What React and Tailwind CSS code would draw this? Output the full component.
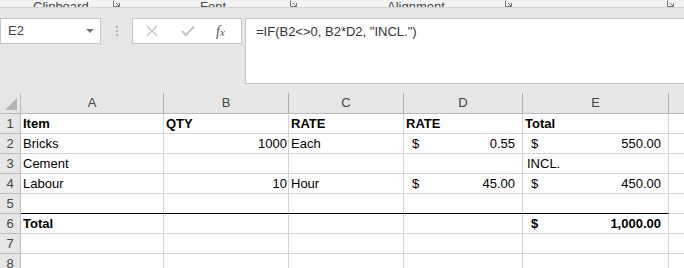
import React from 'react';

const font = { fontFamily: '"Liberation Sans", Arial, sans-serif' };

const cols = [
  { key: 'A', w: 'w-[143px]' },
  { key: 'B', w: 'w-[125px]' },
  { key: 'C', w: 'w-[115px]' },
  { key: 'D', w: 'w-[119px]' },
  { key: 'E', w: 'w-[146px]' },
];

// each row: cells for A..E
const rows = [
  { n: 1, bold: true, cells: ['Item', 'QTY', 'RATE', 'RATE', 'Total'] },
  { n: 2, cells: ['Bricks', { right: '1000' }, 'Each', { acc: '0.55' }, { acc: '550.00' }] },
  { n: 3, cells: ['Cement', '', '', '', { pad: 'INCL.' }] },
  { n: 4, cells: ['Labour', { right: '10' }, 'Hour', { acc: '45.00' }, { acc: '450.00' }] },
  { n: 5, thick: true, cells: ['', '', '', '', ''] },
  { n: 6, bold: true, cells: ['Total', '', '', '', { acc: '1,000.00' }] },
  { n: 7, cells: ['', '', '', '', ''] },
  { n: 8, cells: ['', '', '', '', ''] },
];

function Cell({ value, bold, thick, width }) {
  const border = thick ? 'border-b-black' : 'border-b-[#d4d4d4]';
  let inner = null;
  if (typeof value === 'string') {
    inner = <span className="pl-[2px]">{value}</span>;
  } else if (value.right) {
    inner = <span className="ml-auto pr-[1px]">{value.right}</span>;
  } else if (value.acc) {
    inner = (
      <>
        <span className="pl-[8px]">$</span>
        <span className="ml-auto pr-[7px]">{value.acc}</span>
      </>
    );
  } else if (value.pad) {
    inner = <span className="pl-[4px]">{value.pad}</span>;
  }
  return (
    <div
      className={`${width} h-[20px] shrink-0 flex items-center border-r border-r-[#d4d4d4] border-b ${border} text-[13px] text-black ${bold ? 'font-bold' : ''}`}
    >
      {inner}
    </div>
  );
}

function DialogLauncher() {
  return (
    <svg width="7" height="7" viewBox="0 0 7 7" className="shrink-0">
      <path d="M0.5 0.5 V6.5 H6.5 V3" fill="none" stroke="#777" strokeWidth="1" />
      <path d="M3 3 L6.5 6.5" stroke="#777" strokeWidth="1" />
    </svg>
  );
}

export default function App() {
  return (
    <div className="w-[684px] h-[268px] overflow-hidden bg-white" style={font}>
      {/* ribbon bottom edge, group labels cut off by the window top */}
      <div className="h-[8px] bg-[#f3f3f3] border-b border-[#d5d5d5] overflow-hidden text-[13px] text-[#444]">
        <div className="flex items-end h-[8px]">
          <span className="w-[113px] pl-[33px] leading-[13px] -mb-[5px]">Clipboard</span>
          <div className="mb-[1px]"><DialogLauncher /></div>
          <span className="w-[170px] pl-[80px] leading-[13px] -mb-[5px]">Font</span>
          <div className="mb-[1px]"><DialogLauncher /></div>
          <span className="w-[208px] pl-[90px] leading-[13px] -mb-[5px]">Alignment</span>
          <div className="mb-[1px]"><DialogLauncher /></div>
          <span className="w-[155px]" />
          <div className="mb-[1px]"><DialogLauncher /></div>
        </div>
      </div>

      {/* formula bar */}
      <div className="h-[85px] bg-[#e6e6e6] flex items-start pt-[10px]">
        <div className="w-[101px] h-[26px] bg-white border border-[#c6c6c6] flex items-center pl-[7px] pr-[6px] text-[13px] text-[#444]">
          <span>E2</span>
          <svg width="8" height="4" viewBox="0 0 8 4" className="ml-auto">
            <path d="M0 0 H8 L4 4 Z" fill="#7a7a7a" />
          </svg>
        </div>
        <div className="w-[31px] h-[26px] flex flex-col items-center justify-center gap-[2px]">
          <span className="w-[2px] h-[2px] bg-[#b0b0b0]" />
          <span className="w-[2px] h-[2px] bg-[#b0b0b0]" />
          <span className="w-[2px] h-[2px] bg-[#b0b0b0]" />
        </div>
        <div className="w-[110px] h-[26px] bg-white border border-[#c6c6c6] flex items-center">
          <svg width="12" height="12" viewBox="0 0 12 12" className="ml-[13px]">
            <path d="M1 1 L11 11 M11 1 L1 11" stroke="#c4c4c4" strokeWidth="1.3" />
          </svg>
          <svg width="14" height="12" viewBox="0 0 14 12" className="ml-[23px]">
            <path d="M1 6 L5 10 L13 1.5" fill="none" stroke="#c4c4c4" strokeWidth="2" />
          </svg>
          <span className="ml-[21px] text-[14px] italic text-[#555]" style={{ fontFamily: '"Liberation Serif", serif' }}>
            f<span className="text-[11px]">x</span>
          </span>
        </div>
        <div className="ml-[3px] flex-1 h-[66px] bg-white border border-[#c6c6c6] border-r-0 pl-[10px] pt-[3px] text-[13px] text-[#333]">
          =IF(B2&lt;&gt;0, B2*D2, "INCL.")
        </div>
      </div>

      {/* column headers */}
      <div className="flex h-[21px] bg-[#e6e6e6] border-b border-[#bcbcbc] text-[13px] text-[#444]">
        <div className="w-[21px] shrink-0 border-r border-[#bcbcbc] flex items-end justify-end pr-[3px] pb-[3px]">
          <svg width="12" height="12" viewBox="0 0 12 12">
            <path d="M12 0 V12 H0 Z" fill="#b4b4b4" />
          </svg>
        </div>
        {cols.map((c) => (
          <div key={c.key} className={`${c.w} shrink-0 border-r border-[#ababab] flex items-center justify-center`}>
            {c.key}
          </div>
        ))}
        <div className="flex-1" />
      </div>

      {/* rows */}
      {rows.map((r) => (
        <div key={r.n} className="flex">
          <div className="w-[21px] h-[20px] shrink-0 bg-[#e6e6e6] border-r border-b border-[#bcbcbc] flex items-center justify-center text-[13px] text-[#444]">
            {r.n}
          </div>
          {r.cells.map((v, i) => (
            <Cell key={i} value={v} bold={r.bold} thick={r.thick} width={cols[i].w} />
          ))}
          <div className="flex-1 h-[20px] border-b border-[#d4d4d4]" />
        </div>
      ))}
    </div>
  );
}
